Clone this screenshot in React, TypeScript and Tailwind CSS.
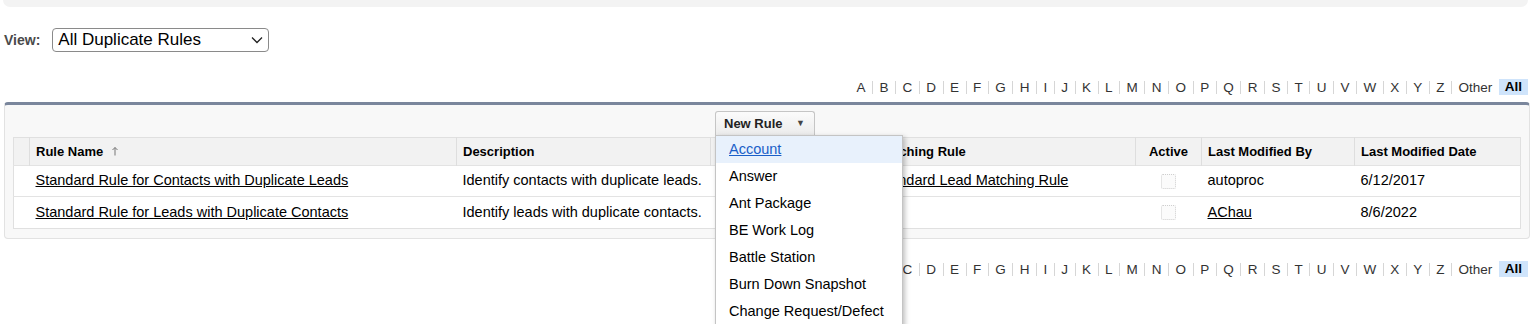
import React from "react";

const letters = "ABCDEFGHIJKLMNOPQRSTUVWXYZ".split("");

function AlphaBar({ className }: { className?: string }) {
  return (
    <div className={"flex justify-end items-center pr-[8px] text-[13.5px] text-[#333] " + (className ?? "")}>
      {letters.map((l, i) => (
        <span
          key={l}
          className={
            "px-[6.5px] leading-[13px] " + (i === 0 ? "" : "border-l border-[#d6d6d6]")
          }
        >
          {l}
        </span>
      ))}
      <span className="px-[6.5px] leading-[13px] border-l border-[#d6d6d6]">Other</span>
      <span className="h-[16px] flex items-center px-[6px] bg-[#cfe4fb] font-bold text-black">All</span>
    </div>
  );
}

const menuItems = [
  "Account",
  "Answer",
  "Ant Package",
  "BE Work Log",
  "Battle Station",
  "Burn Down Snapshot",
  "Change Request/Defect",
  "Contact",
];

const rows = [
  {
    name: "Standard Rule for Contacts with Duplicate Leads",
    desc: "Identify contacts with duplicate leads.",
    obj: "Contact",
    rule: "Standard Lead Matching Rule",
    by: "autoproc",
    byLink: false,
    date: "6/12/2017",
    h: "h-[31px]",
  },
  {
    name: "Standard Rule for Leads with Duplicate Contacts",
    desc: "Identify leads with duplicate contacts.",
    obj: "Lead",
    rule: "",
    by: "AChau",
    byLink: true,
    date: "8/6/2022",
    h: "h-[32px]",
  },
];

function SortArrow() {
  return (
    <svg width="8" height="10" viewBox="0 0 8 10" className="inline-block ml-[8px] -mt-[2px]">
      <path d="M4 9.5V1.5M1.5 4L4 1.5L6.5 4" stroke="#777" strokeWidth="1" fill="none" />
    </svg>
  );
}

export default function App() {
  const th = "text-left font-bold text-[13px] text-black pl-[6px] border-l border-[#dedede] align-middle";
  const td = "pl-[6px] text-[14.5px] text-black align-middle border-t border-[#e3e3e3] whitespace-nowrap overflow-hidden";
  return (
    <div className="w-full h-[324px] overflow-hidden bg-white font-['Liberation_Sans',Arial,sans-serif]">
      <div className="ml-[3px] mr-[8px] h-[7px] bg-[#f3f3f3] rounded-b-[8px]" />

      <div className="flex items-center pl-[4px] mt-[21px] h-[24px]">
        <span className="text-[14px] font-bold text-[#4a4a4a]">View:</span>
        <div className="ml-[12px] w-[217px] h-[24px] border border-[#8a8a8a] rounded-[4px] bg-white flex items-center justify-between pl-[5px] pr-[5px]">
          <span className="text-[17px] text-black leading-[20px]">All Duplicate Rules</span>
          <svg width="12" height="8" viewBox="0 0 12 8">
            <path d="M1 1.5L6 6.5L11 1.5" stroke="#222" strokeWidth="1.3" fill="none" />
          </svg>
        </div>
      </div>

      <AlphaBar className="mt-[27px] h-[16px]" />

      <div className="mt-[7px] ml-[4px] mr-[6px] bg-[#f8f8f8] border border-[#e2e2e2] border-t-[3px] border-t-[#7a869c] rounded-[4px] pb-[9px]">
        <div className="flex justify-center pt-[6px] pr-[4px]">
          <div className="relative">
            <div className="w-[100px] h-[24px] flex items-center justify-between pl-[8px] pr-[9px] bg-gradient-to-b from-[#fbfbfb] to-[#ececec] border border-[#c5c5c5] border-b-0 rounded-t-[3px]">
              <span className="text-[13px] font-bold text-[#222]">New Rule</span>
              <span className="text-[9px] text-[#444]">▼</span>
            </div>
            <div className="absolute left-0 top-[24px] w-[188px] z-10 bg-white border border-[#c4c4c4] shadow-[2px_2px_5px_rgba(0,0,0,0.25)]">
              {menuItems.map((m, i) => (
                <div
                  key={m}
                  className={
                    "h-[27px] flex items-center pl-[13px] text-[14.5px] " +
                    (i === 0 ? "bg-[#e8f1fc] text-[#1a5fc8] underline" : "text-black")
                  }
                >
                  {m}
                </div>
              ))}
            </div>
          </div>
        </div>

        <table className="mt-[2px] ml-[8px] w-[1507px] table-fixed border-collapse bg-white border border-[#e0e0e0]">
          <colgroup>
            <col className="w-[16px]" />
            <col className="w-[427px]" />
            <col className="w-[254px]" />
            <col className="w-[160px]" />
            <col className="w-[265px]" />
            <col className="w-[66px]" />
            <col className="w-[153px]" />
            <col className="w-[166px]" />
          </colgroup>
          <thead>
            <tr className="h-[28px] bg-[#f2f2f2]">
              <th className="border-l-0" />
              <th className={th}>
                Rule Name
                <SortArrow />
              </th>
              <th className={th}>Description</th>
              <th className={th}>Object</th>
              <th className={th}>Matching Rule</th>
              <th className={th + " !text-center !pl-0"}>Active</th>
              <th className={th}>Last Modified By</th>
              <th className={th}>Last Modified Date</th>
            </tr>
          </thead>
          <tbody>
            {rows.map((r) => (
              <tr key={r.name} className={r.h}>
                <td className="border-t border-[#e3e3e3]" />
                <td className={td}>
                  <span className="underline">{r.name}</span>
                </td>
                <td className={td}>{r.desc}</td>
                <td className={td}>{r.obj}</td>
                <td className={td}>
                  {r.rule ? <span className="underline">{r.rule}</span> : null}
                </td>
                <td className="border-t border-[#e3e3e3] align-middle">
                  <div className="mx-auto w-[15px] h-[15px] border border-dotted border-[#cfcfcf] bg-[#fbfbfb] rounded-[2px]" />
                </td>
                <td className={td}>
                  {r.byLink ? <span className="underline">{r.by}</span> : r.by}
                </td>
                <td className={td}>{r.date}</td>
              </tr>
            ))}
          </tbody>
        </table>
      </div>

      <AlphaBar className="mt-[22px] h-[16px]" />
    </div>
  );
}
